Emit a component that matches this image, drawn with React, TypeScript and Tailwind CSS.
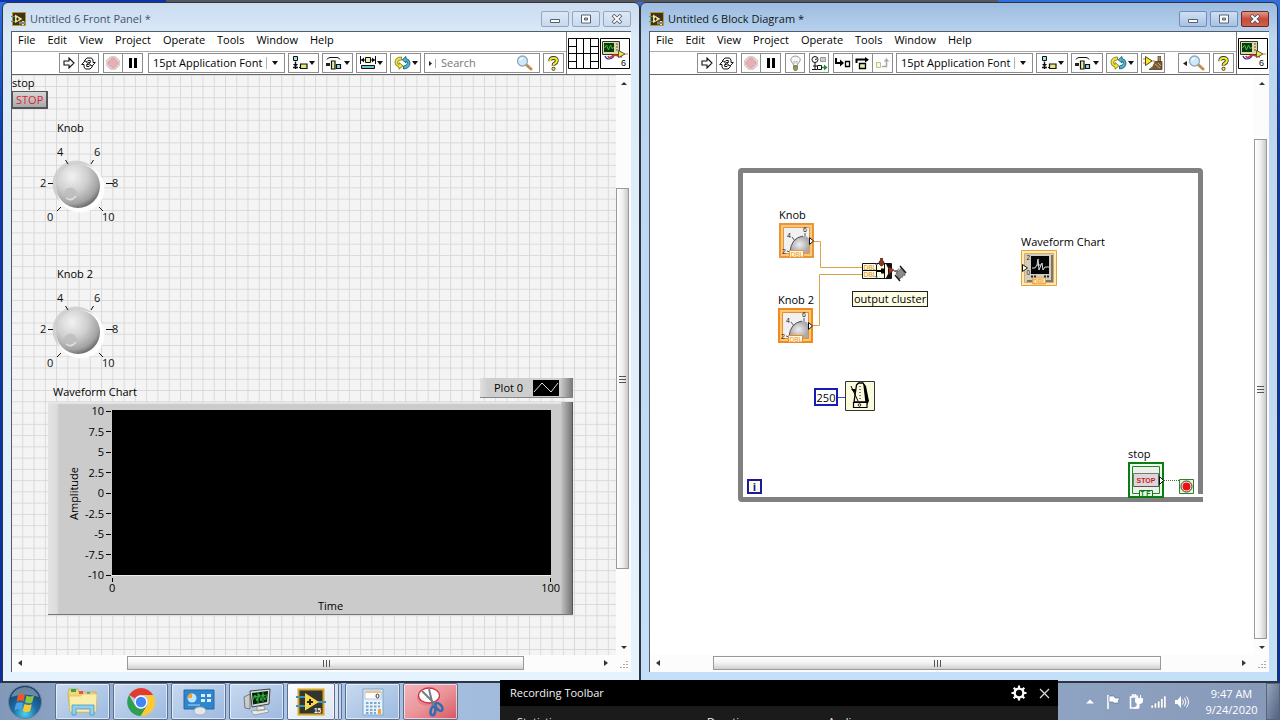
import type { ReactNode } from "react";

const MENUS = ["File", "Edit", "View", "Project", "Operate", "Tools", "Window", "Help"];
const Y_TICKS = ["10", "7.5", "5", "2.5", "0", "-2.5", "-5", "-7.5", "-10"];

/* ---------- toolbar icons ---------- */

function Caret() {
  return (
    <svg width="6" height="4" viewBox="0 0 6 4" className="shrink-0">
      <path d="M0 0h6L3 4z" fill="#111" />
    </svg>
  );
}

function RunIcon() {
  return (
    <svg width="12" height="12" viewBox="0 0 12 12">
      <path d="M1 4h5V1l5 5-5 5V8H1z" fill="#fff" stroke="#111" strokeWidth="1.1" />
    </svg>
  );
}

function RunLoopIcon() {
  return (
    <svg width="15" height="13" viewBox="0 0 15 13" fill="#fff" stroke="#111" strokeWidth="1">
      <path d="M3.500 3.500 6 1h4.500L12 3V5.500h2.300L10.800 9.300 7.300 5.500h2V3.500H7L5.500 5z" />
      <path d="M11.500 9.500 9 12H4.500L3 10V7.500H.7L4.200 3.700 7.700 7.500h-2v2H8L9.500 8z" />
    </svg>
  );
}

function AbortIcon() {
  return (
    <svg width="14" height="14" viewBox="0 0 14 14">
      <path d="M4.500 1h5L13 4.500v5L9.500 13h-5L1 9.500v-5z" fill="#fff" stroke="#b0a0a0" />
      <circle cx="7" cy="7" r="4.700" fill="#e6aeb5" stroke="#cf929b" strokeWidth=".8" />
    </svg>
  );
}

function PauseIcon() {
  return (
    <svg width="10" height="10" viewBox="0 0 10 10">
      <path d="M1 0h3v10H1zM6 0h3v10H6z" fill="#000" />
    </svg>
  );
}

function AlignIcon() {
  return (
    <svg width="16" height="14" viewBox="0 0 16 14">
      <path d="M1.500.5h4v4h-4z" fill="#9fe0ee" stroke="#111" />
      <path d="M3.500 5.500v3M3.500 10v3M1 11.500h5" stroke="#111" strokeWidth="1.400" />
      <path d="M1 8h5L3.500 11z" fill="#111" />
      <path d="M7 11.500h1.500" stroke="#111" />
      <path d="M8.500 8h6.500v4.500H8.500z" fill="#e6ea7e" stroke="#111" strokeWidth="1.200" />
    </svg>
  );
}

function DistributeIcon() {
  return (
    <svg width="17" height="14" viewBox="0 0 17 14">
      <path d="M1 3.500q1-2 3-2h7q2 0 3 2" fill="none" stroke="#111" />
      <path d="M0 7h4v3H0z" fill="#222" />
      <path d="M5.500 5h3.500v8H5.500z" fill="#eef09a" stroke="#111" strokeWidth="1.200" />
      <path d="M10.500 8.500h4v4h-4z" fill="#8fdcec" stroke="#111" strokeWidth="1.200" />
    </svg>
  );
}

function ResizeIcon() {
  return (
    <svg width="16" height="14" viewBox="0 0 16 14">
      <path d="M.5 0v8M15.500 0v8M1 4h4M11 4h4" stroke="#111" />
      <path d="M4 1.500v5L1 4zM12 1.500v5L15 4z" fill="#111" />
      <path d="M5.500 1.500h5v5h-5z" fill="#eef09a" stroke="#111" />
      <path d="M1.500 9.500h13v3h-13z" fill="#69c5dc" stroke="#111" />
    </svg>
  );
}

function ReorderIcon() {
  return (
    <svg width="17" height="14" viewBox="0 0 17 14" strokeWidth=".8">
      <path d="M7.500 1Q1 1 1 6.500q0 3.500 4 4.500v2.200L9 9.800 5 6.500v2Q3.500 8 3.500 6.500q0-2.500 4-2.500z" fill="#ede63a" stroke="#77720b" />
      <path d="M9.500 13q6.500-.5 6.500-6 0-3.500-4-4.500V.5L8.200 3.800 12 7V5q1.500.5 1.500 2 0 2.500-4 3z" fill="#4fb5cf" stroke="#0b566b" />
    </svg>
  );
}

function MagnifierIcon() {
  return (
    <svg width="17" height="16" viewBox="0 0 17 16" className="shrink-0">
      <path d="m10 9.500 5 4.500" stroke="#c6894f" strokeWidth="3" strokeLinecap="round" />
      <circle cx="6.500" cy="6" r="5" fill="#cfe9f8" stroke="#8eabc0" strokeWidth="1.300" />
      <path d="M3.800 5.500Q4.500 3.300 7 3.200" fill="none" stroke="#fff" strokeWidth="1.300" />
    </svg>
  );
}

function HelpIcon() {
  return (
    <svg width="11" height="15" viewBox="0 0 11 15">
      <path d="M2.300 5Q2 2 5.500 2t3.300 2.800Q8.600 6.600 6.600 7.400 5.500 8 5.500 9.700" fill="none" stroke="#333" strokeWidth="3.800" />
      <circle cx="5.500" cy="12.700" r="2" fill="#333" />
      <path d="M2.300 5Q2 2 5.500 2t3.300 2.800Q8.600 6.600 6.600 7.400 5.500 8 5.500 9.500" fill="none" stroke="#f3ea2c" strokeWidth="2.200" />
      <circle cx="5.500" cy="12.700" r="1.200" fill="#f3ea2c" />
    </svg>
  );
}

function BulbIcon() {
  return (
    <svg width="13" height="16" viewBox="0 0 13 16">
      <path d="M4.500 10.500Q4.500 9 3 7.500 1.200 5.500 2 3.500 3.300 1 6.500 1T11 3.500q.8 2-1 4-1.500 1.500-1.500 3z" fill="#f6f6f6" stroke="#999" />
      <path d="M5 9V6l1.500 1.200L8 6v3" fill="none" stroke="#aaa" strokeWidth=".8" />
      <path d="M4.500 11h4v3l-1 1.500h-2l-1-1.500z" fill="#9b9a55" stroke="#66653b" strokeWidth=".7" />
    </svg>
  );
}

function RetainIcon() {
  return (
    <svg width="17" height="15" viewBox="0 0 17 15">
      <circle cx="4" cy="3.500" r="3" fill="#fff" stroke="#111" />
      <path d="M4 6.500v7M4 3.500 6 3M1 13.500h5M2 10h4" stroke="#111" />
      <path d="M9.500 1.500h5v4h-5z" fill="#ccc" stroke="#999" />
      <path d="M6.500 9.500h4v4h-4z" fill="#fff" stroke="#111" />
      <path d="M11 11.500h4" stroke="#1e8e2d" strokeWidth="1.500" />
      <path d="M13 8.500v6l3.500-3z" fill="#1e8e2d" />
    </svg>
  );
}

function StepIntoIcon() {
  return (
    <svg width="16" height="12" viewBox="0 0 16 12">
      <path d="M1 1v5h6" fill="none" stroke="#000" strokeWidth="2" />
      <path d="M5 2.500v7L9 6z" fill="#000" />
      <path d="M10.500 4.500h4v5h-4z" fill="#fff" stroke="#000" strokeWidth="1.300" />
    </svg>
  );
}

function StepOverIcon() {
  return (
    <svg width="15" height="13" viewBox="0 0 15 13">
      <path d="M1.500 6V2.500H11" fill="none" stroke="#000" strokeWidth="2" />
      <path d="M10 0v5.500l4-2.800z" fill="#000" />
      <path d="M4.500 6.500h6v5h-6z" fill="#e9e9b0" stroke="#000" strokeWidth="1.300" />
    </svg>
  );
}

function StepOutIcon() {
  return (
    <svg width="15" height="12" viewBox="0 0 15 12">
      <path d="M1.500 5.500h4v5h-4z" fill="#fbfbdc" stroke="#bdbd86" />
      <path d="M7 9.500h4.500V4" fill="none" stroke="#aaa" strokeWidth="1.500" />
      <path d="M8.800 4.500h5.400L11.500 1z" fill="#aaa" />
    </svg>
  );
}

function CleanupIcon() {
  return (
    <svg width="20" height="14" viewBox="0 0 20 14" className="shrink-0">
      <path d="M0 3h4M0 7h4M9 5h3" stroke="#c47b3c" />
      <path d="M2.500.5 9 5 2.500 9.500z" fill="#f5e62c" stroke="#554c0c" />
      <path d="M15 0h2.500v6H15z" fill="#a58a55" stroke="#4f3a1c" strokeWidth=".7" />
      <path d="M12 5.500h7V13.500H6q5-2 6-8z" fill="#7a5a34" stroke="#3f2c14" strokeWidth=".7" />
      <path d="m12 8 5 4M15 7l3 3" stroke="#c9a86f" />
    </svg>
  );
}

function ViIcon() {
  return (
    <svg width="30" height="31" viewBox="0 0 30 31" className="shrink-0">
      <path d="M.5.5h29v30H.5z" fill="#fff" stroke="#000" />
      <path d="M2.500 3.500h17v13h-17z" fill="#e0d8a4" stroke="#333" />
      <path d="M4 5h10v9H4z" fill="#053c0c" />
      <path d="M4.500 10l2-3 2 5 2-5 2 4 1-2" fill="none" stroke="#48b848" />
      <path d="M16 6h2M16 9h2M16 12h2" stroke="#555" />
      <path d="M5 18q1 3 4 3t5-3" fill="none" stroke="#2c35a8" strokeWidth="1.200" />
      <path d="M8 18q1 2.500 3 1 3-3 7-1l4 1" fill="none" stroke="#d2332f" strokeWidth="1.700" />
      <path d="M18.500 12.500 25 16l-6.500 3.500z" fill="#f5e62c" stroke="#555" />
      <path d="M25 16h3" stroke="#d99b2b" strokeWidth="1.200" />
      <text x="21" y="28" fontSize="9" fontFamily="Liberation Sans, sans-serif" fill="#000">6</text>
    </svg>
  );
}

function ConnectorPane() {
  return (
    <svg width="31" height="31" viewBox="0 0 31 31" className="shrink-0">
      <path d="M.5.5h30v30H.5z" fill="#fff" stroke="#000" />
      <path d="M8.500 0v31M15.500 0v31M22.500 0v31M0 15.500h31M0 8.500h8M0 23.500h8M23 8.500h8M23 23.500h8" stroke="#000" fill="none" />
    </svg>
  );
}

function AppIcon() {
  return (
    <svg width="15" height="14" viewBox="0 0 15 14" className="shrink-0">
      <path d="M1.500.5h13v13h-13z" fill="#3a3420" stroke="#b9952c" />
      <path d="M0 4.500h4M0 9.500h4" stroke="#3b92b8" />
      <path d="M4 2.500 11.500 7 4 11z" fill="#f4e48a" />
      <path d="M5 7h3M6.500 5.500v3" stroke="#222" />
      <path d="M9 12.500v-3M11 9.500h2v3h-2z" stroke="#fff" strokeWidth=".8" fill="none" />
    </svg>
  );
}

/* ---------- window chrome ---------- */

function ToolButton({ label, size, children }: { label: string; size: string; children: ReactNode }) {
  return (
    <button
      type="button"
      aria-label={label}
      className={`flex h-5 shrink-0 items-center justify-center gap-px border border-[#8c8c8c] bg-[#fdfdfd] ${size}`}
    >
      {children}
    </button>
  );
}

function FontSelect({ id }: { id: string }) {
  return (
    <div className="relative flex h-5 w-[137px] shrink-0 items-center border border-[#8c8c8c] bg-white">
      <select id={id} aria-label="Font" className="h-full w-full appearance-none bg-transparent pl-1 text-[11px] leading-4 outline-none">
        <option>15pt Application Font</option>
      </select>
      <span className="pointer-events-none absolute inset-y-0 right-0 flex w-[18px] items-center justify-center">
        <span className="absolute left-0 h-3 w-px bg-[#b5b5b5]" />
        <Caret />
      </span>
    </div>
  );
}

function RunButtons() {
  return (
    <>
      <div className="flex">
        <ToolButton label="Run" size="w-5"><RunIcon /></ToolButton>
        <ToolButton label="Run continuously" size="w-[21px] -ml-px"><RunLoopIcon /></ToolButton>
      </div>
      <div className="flex">
        <ToolButton label="Abort execution" size="w-5"><AbortIcon /></ToolButton>
        <ToolButton label="Pause" size="w-[21px] -ml-px"><PauseIcon /></ToolButton>
      </div>
    </>
  );
}

function MenuBar() {
  return (
    <nav className="flex h-[19px] items-center gap-3 pb-[3px] pl-1.5 text-[11px] leading-4">
      {MENUS.map((m) => (
        <button key={m} type="button">{m}</button>
      ))}
    </nav>
  );
}

function CaptionButtons({ active }: { active?: boolean }) {
  const plain = active
    ? "border-[#6f8db5] bg-linear-to-b from-[#cfe0f4] to-[#a8c2e2]"
    : "border-[#94a5bd] bg-linear-to-b from-[#dce8f5] to-[#c9daee]";
  const close = active
    ? "border-[#6d2b28] bg-linear-to-b from-[#e09a88] via-[#c94a38] to-[#d0604a]"
    : plain;
  return (
    <div className="flex gap-[3px]">
      <button type="button" aria-label="Minimize" className={`flex h-4 w-7 items-center justify-center rounded-xs border ${plain}`}>
        <svg width="12" height="10" viewBox="0 0 12 10">
          <path d="M1.500 5.500h9v3h-9z" fill="#fff" stroke="#55606e" />
        </svg>
      </button>
      <button type="button" aria-label="Restore" className={`flex h-4 w-7 items-center justify-center rounded-xs border ${plain}`}>
        <svg width="12" height="10" viewBox="0 0 12 10">
          <path d="M1.500 1h9v8h-9z" fill="#fff" stroke="#55606e" />
          <path d="M4.500 4h3v2h-3z" fill="#bcd" stroke="#55606e" />
        </svg>
      </button>
      <button type="button" aria-label="Close" className={`flex h-4 w-7 items-center justify-center rounded-xs border ${close}`}>
        <svg width="12" height="10" viewBox="0 0 12 10">
          <path d="m2 1 8 8M10 1 2 9" stroke="#4d5663" strokeWidth="3.600" />
          <path d="m2.500 1.500 7 7M9.500 1.500l-7 7" stroke="#fff" strokeWidth="2" />
        </svg>
      </button>
    </div>
  );
}

function Arrow({ d, label }: { d: string; label: string }) {
  return (
    <button type="button" aria-label={label} className="flex size-4 shrink-0 items-center justify-center">
      <svg width="8" height="8" viewBox="0 0 8 8"><path d={d} fill="#333" /></svg>
    </button>
  );
}

function VScroll({ thumb }: { thumb: string }) {
  return (
    <div className="flex w-[15px] shrink-0 flex-col items-center bg-[#fcfcfc]">
      <Arrow label="Scroll up" d="M1 6h6L4 3z" />
      <div className="flex w-full flex-1 flex-col pr-0.5">
        <div className={`flex items-center justify-center border border-[#999] bg-linear-to-r from-white via-[#f0f0f0] to-[#c9c9cc] ${thumb}`}>
          <svg width="7" height="8" viewBox="0 0 7 8"><path d="M0 1.500h7M0 4.500h7M0 7.500h7" stroke="#555" /></svg>
        </div>
      </div>
      <Arrow label="Scroll down" d="M1 3h6L4 6z" />
    </div>
  );
}

function HScroll({ thumb }: { thumb: string }) {
  return (
    <div className="flex h-[17px] shrink-0 items-center bg-[#fcfcfc] pb-px">
      <Arrow label="Scroll left" d="M6 1v6L2 4z" />
      <div className="flex h-full flex-1 items-center">
        <div className={`flex h-[14px] items-center justify-center border border-[#999] bg-linear-to-b from-white via-[#f2f2f2] to-[#cfcfcf] ${thumb}`}>
          <svg width="8" height="7" viewBox="0 0 8 7"><path d="M1.500 0v7M4.500 0v7M7.500 0v7" stroke="#555" /></svg>
        </div>
      </div>
      <Arrow label="Scroll right" d="M2 1v6l4-3z" />
      <svg width="17" height="17" viewBox="0 0 17 17" className="shrink-0">
        <path d="M12 6h2v1h-2zM9 9h2v1H9zM12 9h2v1h-2zM6 12h2v1H6zM9 12h2v1H9zM12 12h2v1h-2z" fill="#aaa" />
      </svg>
    </div>
  );
}

function AppWindow(props: {
  title: string;
  active?: boolean;
  toolbar: ReactNode;
  corner: ReactNode;
  thumbV: string;
  thumbH: string;
  children: ReactNode;
}) {
  const frame = props.active
    ? "bg-linear-to-b from-[#9dbce0] via-[#bcd5f1] via-5% to-[#c4dff8]"
    : "bg-linear-to-b from-[#cbdcf0] via-[#dcebf9] via-5% to-[#e4f3fd]";
  const title = props.active ? "text-[#101820]" : "text-[#46536a]";
  return (
    <section className={`flex min-w-0 flex-1 flex-col rounded-t-md border border-[#30343c] px-2 pb-[9px] ${frame}`}>
      <header className="flex h-7 shrink-0 items-center gap-1 pt-1">
        <AppIcon />
        <h2 className={`flex-1 text-[11px] leading-4 ${title}`}>{props.title}</h2>
        <CaptionButtons active={props.active} />
      </header>
      <div className="flex min-h-0 flex-1 flex-col border-t border-l border-[#555c66] bg-white">
        <div className="flex shrink-0 border-b border-[#666]">
          <div className="min-w-0 flex-1">
            <MenuBar />
            <div className="flex h-[23px] items-center border-t border-[#aaa] pr-0.5 pl-[47px]">{props.toolbar}</div>
          </div>
          <div className="flex items-center border-l border-[#777] px-px">{props.corner}</div>
        </div>
        <div className="flex min-h-0 flex-1">
          <div className="relative min-w-0 flex-1 overflow-hidden">{props.children}</div>
          <VScroll thumb={props.thumbV} />
        </div>
        <HScroll thumb={props.thumbH} />
      </div>
    </section>
  );
}

/* ---------- front panel ---------- */

function Knob({ label, place, id }: { label: string; place: string; id: string }) {
  return (
    <figure className={`absolute w-[84px] ${place}`}>
      <figcaption className="pl-[18px] text-[11px] leading-4">{label}</figcaption>
      <svg width="84" height="90" viewBox="0 0 84 90" role="img" aria-label={label} className="block">
        <defs>
          <radialGradient id={id} cx=".36" cy=".28" r=".78">
            <stop offset="0" stopColor="#f2f2f2" />
            <stop offset=".45" stopColor="#d0d0d0" />
            <stop offset=".8" stopColor="#a2a2a2" />
            <stop offset="1" stopColor="#5c5c5c" />
          </radialGradient>
        </defs>
        <circle cx="37" cy="48" r="23.500" fill="#c9c9c9" opacity=".8" />
        <circle cx="41.500" cy="52.500" r="24" fill="#fff" opacity=".9" />
        <circle cx="39" cy="50" r="22" fill={`url(#${id})`} />
        <circle cx="31.500" cy="58" r="6.500" fill="#bdbdbd" opacity=".8" />
        <path d="M27 62q5 4 10-2" fill="none" stroke="#dedede" strokeWidth="1.500" />
        <path d="M26.500 24l2.500 4M54.500 24 52 28M9 47.500h5M67 47.500h7M18 75l4-4M60 71l4 4" stroke="#111" />
        <g fontFamily="Open Sans, Noto Sans, sans-serif" fontSize="11" fill="#111">
          <text x="18" y="20">4</text>
          <text x="55" y="20">6</text>
          <text x="1" y="51">2</text>
          <text x="73" y="51">8</text>
          <text x="8" y="85">0</text>
          <text x="63" y="85">10</text>
        </g>
      </svg>
    </figure>
  );
}

function WaveformChart() {
  return (
    <figure className="absolute top-[327px] left-9 w-[525px] border-b border-[#777] bg-[linear-gradient(to_right,#e4e4e4_0,#dcdcdc_9px,#cbcbcb_11px)] pt-2 shadow-[inset_0_2px_1px_#e6e6e6]">
      <div className="flex">
        <div className="flex w-10 items-center justify-center pl-3">
          <span className="rotate-180 text-[11px] leading-4 [writing-mode:vertical-rl]">Amplitude</span>
        </div>
        <ol className="-my-[7px] flex h-[180px] w-6 flex-col justify-between text-[11px] leading-4">
          {Y_TICKS.map((t) => (
            <li key={t} className="flex h-4 items-center justify-end gap-0.5 pr-px whitespace-nowrap">
              {t}
              <span className="h-px w-[5px] shrink-0 bg-black" />
            </li>
          ))}
        </ol>
        <div className="h-[166px] w-[439px] border-b border-[#eee] bg-black" />
      </div>
      <div className="ml-[61px] flex h-[22px] w-[451px] justify-between text-[11px] leading-3">
        <span className="flex flex-col items-center"><i className="mt-0.5 h-1 w-px bg-black" />0</span>
        <span className="flex flex-col items-center"><i className="mt-0.5 h-1 w-px bg-black" />100</span>
      </div>
      <p className="pl-10 text-center text-[11px] leading-4">Time</p>
      <span className="absolute inset-y-0 right-0 w-3 border-r border-[#555] bg-linear-to-r from-[#c4c4c4] to-[#777]" />
    </figure>
  );
}

function FrontPanel() {
  return (
    <div className="h-full bg-[#f4f4f4] text-black">
      <svg className="absolute inset-0 h-full w-full" aria-hidden="true">
        <defs>
          <pattern id="panel-grid" width="11.26" height="11.26" x="10.3" y="-.2" patternUnits="userSpaceOnUse">
            <path d="M.5 0v11.260M0 .5h11.260" stroke="#d9d9d9" />
          </pattern>
        </defs>
        <rect width="100%" height="100%" fill="url(#panel-grid)" />
      </svg>
      <div className="absolute top-0 left-0 flex flex-col items-start">
        <label htmlFor="stop" className="text-[11px] leading-4">stop</label>
        <button
          id="stop"
          type="button"
          className="h-[18px] border border-r-2 border-b-2 border-[#555] bg-linear-to-b from-[#d6d6d6] to-[#aaa] px-[3px] text-[11px] leading-3 text-[#dc1f36]"
        >
          STOP
        </button>
      </div>
      <Knob id="knob-a" label="Knob" place="top-[45px] left-[27px]" />
      <Knob id="knob-b" label="Knob 2" place="top-[191px] left-[27px]" />
      <span className="absolute top-[309px] left-[41px] text-[11px] leading-4">Waveform Chart</span>
      <div className="absolute top-[303px] left-[468px] flex h-5 w-[93px] items-center gap-2.5 border-b border-[#888] bg-[linear-gradient(to_right,#e0e0e0_0,#cecece_8px,#cecece_80px,#777_100%)] pl-[14px] text-[11px] leading-4">
        Plot 0
        <svg width="26" height="16" viewBox="0 0 26 16">
          <path d="M0 0h26v16H0z" fill="#000" />
          <path d="M1 12 9 3l9 9 7-9" fill="none" stroke="#ddd" />
        </svg>
      </div>
      <WaveformChart />
    </div>
  );
}

/* ---------- block diagram ---------- */

function KnobTerminal({ label, place, border, id }: { label: string; place: string; border: string; id: string }) {
  return (
    <div className={`absolute ${place}`}>
      <p className="text-[11px] leading-4">{label}</p>
      <svg width="36" height="36" viewBox="0 0 36 36" className="block">
        <defs>
          <radialGradient id={id}>
            <stop offset="0" stopColor="#eee" />
            <stop offset="1" stopColor="#a9a9ad" />
          </radialGradient>
        </defs>
        <path d="M1 1h33v33H1z" fill="#fbc77c" stroke={border} strokeWidth="2" />
        <path d="M4.500 4.500h26v26h-26z" fill="#f1f1f3" stroke={border} />
        <path d="M11 30q1-16 13-17 6 0 6 4v13z" fill={`url(#${id})`} />
        <path d="M11 29q1-14 13-16M26 10v3M13 14l3 4M8 28l3 1" fill="none" stroke="#555" />
        <path d="M30.500 14.500v7l4-3.500z" fill="#fff" stroke="#111" />
        <path d="M10.500 27.500h14v7h-14z" fill="#fff7df" stroke={border} />
        <g fontFamily="Liberation Sans, sans-serif" fill="#222" fontSize="7">
          <text x="24" y="9">6</text>
          <text x="8" y="15">4</text>
          <text x="3" y="31">2</text>
          <text x="11.500" y="33.500" fill="#e5921f" fontSize="6.500">DBL</text>
        </g>
      </svg>
    </div>
  );
}

function ChartTerminal() {
  return (
    <div className="absolute top-[159px] left-[371px]">
      <p className="text-[11px] leading-4 whitespace-nowrap">Waveform Chart</p>
      <svg width="36" height="36" viewBox="0 0 36 36" className="block">
        <path d="M.5.5h35v35H.5z" fill="#ffeab0" stroke="#d9a441" />
        <path d="M3.500 3.500h29v29h-29z" fill="#d1cdbf" stroke="#e0a85c" />
        <path d="M31 5v26H6" fill="none" stroke="#777" strokeWidth="2" />
        <path d="M10 6h18v18H10z" fill="#050505" />
        <path d="M11 18h3l2-3 1-6 1 11 3-7 1 7 2-3h4M16 15h4" fill="none" stroke="#ddd" />
        <path d="M1.500 14.500v7l5-3.500z" fill="#fff" stroke="#111" />
        <path d="M10 26.500h5M23 26.500h6" stroke="#222" strokeWidth="2" strokeDasharray="2 1" />
        <path d="M11.500 28h13v6h-13z" fill="#ffe6b5" stroke="#e5921f" strokeWidth=".7" />
        <g fontFamily="Liberation Sans, sans-serif" fill="#222" fontSize="6.500">
          <text x="5.500" y="10">2</text>
          <text x="5.500" y="25">0</text>
          <text x="12" y="33.500" fill="#e5921f">DBL</text>
        </g>
      </svg>
    </div>
  );
}

function BundleNode() {
  return (
    <svg width="46" height="24" viewBox="0 0 46 24" className="absolute top-[183px] left-[212px]">
      <path d="M.5 5.500h29v15H.5z" fill="#fdfbe0" stroke="#111" />
      <path d="M0 12.500h15M14.500 5v16M22.500 5v16" stroke="#111" fill="none" />
      <g fontFamily="Liberation Sans, sans-serif" fontSize="6.500" fill="#dc8b1b">
        <text x="1.500" y="11.500">DBL</text>
        <text x="1.500" y="19">DBL</text>
      </g>
      <path d="M15 12h4v-1.500h4v5h-4V14h-4z" fill="#000" />
      <path d="M24 6h5v14h-5l2-4v-6z" fill="#111" />
      <path d="M26 10l-2 3 2 3" fill="none" stroke="#fff" />
      <path d="m13 7 1.500-2L16 7zM13 18.500l1.500 2 1.500-2z" fill="#3a7ee0" />
      <path d="M17 6V4l1.500-2V0h2v2L22 4v2l-2 2h-1z" fill="#8c3322" stroke="#4b130b" strokeWidth=".6" />
      <path d="m27 9 5 3-5 4z" fill="#a33422" stroke="#5f170c" strokeWidth=".6" />
      <path d="M32 13h4" stroke="#111" />
      <path d="m34 15 6-5 3 6-6 5z" fill="#8b8b8b" stroke="#333" strokeWidth=".6" />
      <path d="M33 17l5 6M38 8l6 7" stroke="#222" strokeWidth="1.600" />
      <path d="M33 13.500l6-4M37 21.500l7-5" stroke="#444" strokeDasharray="1 1" />
    </svg>
  );
}

function MetronomeNode() {
  return (
    <svg width="30" height="30" viewBox="0 0 30 30" className="absolute top-[306px] left-[195px]">
      <path d="M.5.500h29v29H.5z" fill="#fafadc" stroke="#333" />
      <path d="m11.500 4 2-2h5l2.500 3 3 15-3 6" fill="#000" />
      <path d="m11.500 4 2-2h4.500l1 2 2 17H9z" fill="#fafadc" stroke="#000" strokeWidth="1.300" />
      <path d="M8.500 21.500H22v5H8.500z" fill="#fafadc" stroke="#000" strokeWidth="1.200" />
      <path d="m6 5 7 15" stroke="#000" fill="none" />
      <path d="m6 8 4.500 0-1 4z" fill="#000" />
      <path d="M15 5v14" stroke="#000" strokeDasharray="1 2" />
      <circle cx="14.500" cy="24" r="1.300" fill="none" stroke="#000" strokeWidth=".8" />
    </svg>
  );
}

function StopTerminal() {
  return (
    <div className="absolute top-[371px] left-[478px]">
      <p className="text-[11px] leading-4">stop</p>
      <svg width="36" height="36" viewBox="0 0 36 36" className="block">
        <path d="M1 1h34v34H1z" fill="#eafbea" stroke="#0e7a16" strokeWidth="2" />
        <path d="M4.500 4.500h27v27h-27z" fill="#eeeeea" stroke="#1c8a24" />
        <path d="M5.500 11.500h25v13h-25z" fill="#dbd8d9" stroke="#777" />
        <path d="M6 24.500h25V12" fill="none" stroke="#555" />
        <path d="M31.500 14.500v8l4-4z" fill="#fff" stroke="#111" />
        <path d="M11.500 28.500h13v6h-13z" fill="#dff8df" stroke="#0e7a16" />
        <g fontFamily="Liberation Sans, sans-serif" fontWeight="700">
          <text x="8.500" y="21" fontSize="7" fill="#cc1b2b">STOP</text>
          <text x="12.500" y="34" fontSize="6.500" fill="#0e7a16">T F</text>
        </g>
      </svg>
    </div>
  );
}

function BlockDiagram() {
  return (
    <div className="h-full bg-white text-black">
      <div className="absolute top-[93px] left-[88px] h-[334px] w-[465px] rounded-sm rounded-br-none border-[5px] border-[#808080]" />
      <span className="absolute top-[419px] left-[544px] h-[3px] w-[9px] bg-white" />
      <svg width="600" height="440" viewBox="0 0 600 440" className="absolute top-0 left-0" fill="none">
        <path d="M164 166.500h6.500v26H213M163 250.500h6.500v-51H213" stroke="#dfa04c" />
        <path d="M187 322.500h9" stroke="#4a4ac0" />
        <path d="M514 405.500h17" stroke="#2c7a32" strokeDasharray="1 1" />
      </svg>
      <KnobTerminal id="term-a" label="Knob" border="#e9963a" place="top-[132px] left-[129px]" />
      <KnobTerminal id="term-b" label="Knob 2" border="#f08a1c" place="top-[217px] left-[128px]" />
      <BundleNode />
      <span role="tooltip" className="absolute top-[216px] left-[202px] border border-[#222] bg-[#fdfde4] px-px text-[11px] leading-[14px] whitespace-nowrap">
        output cluster
      </span>
      <ChartTerminal />
      <input
        aria-label="Milliseconds to wait"
        defaultValue="250"
        className="absolute top-[313px] left-[164px] h-[18px] w-6 border-2 border-[#1a1ab4] bg-white text-center text-[11px] leading-3"
      />
      <MetronomeNode />
      <span className="absolute top-[404px] left-[97px] flex size-[15px] items-center justify-center border-2 border-[#1a1a9a] bg-[#fdfde8] text-[11px] leading-3 font-bold text-[#1a1a9a]">
        i
      </span>
      <StopTerminal />
      <svg width="15" height="15" viewBox="0 0 15 15" className="absolute top-[404px] left-[529px]">
        <path d="M.5.500h14v14H.5z" fill="#e3f9c8" stroke="#3d7a2c" />
        <circle cx="7.500" cy="7.500" r="5.500" fill="#fff" stroke="#333" />
        <circle cx="7.500" cy="7.500" r="4" fill="#ef1010" />
      </svg>
    </div>
  );
}

/* ---------- taskbar ---------- */

function StartOrb() {
  return (
    <button type="button" aria-label="Start" className="ml-1.5 flex w-[38px] items-center justify-center">
      <svg width="36" height="36" viewBox="0 0 36 36">
        <defs>
          <radialGradient id="orb" cx=".5" cy=".85" r=".8">
            <stop offset="0" stopColor="#49d4ee" />
            <stop offset=".45" stopColor="#1d6ba6" />
            <stop offset="1" stopColor="#173c66" />
          </radialGradient>
        </defs>
        <circle cx="18" cy="18" r="16.500" fill="url(#orb)" stroke="#6b8299" />
        <path d="M4 13Q8 3 18 3t14 10q-14-5-28 0z" fill="#fff" opacity=".35" />
        <path d="M11 11q3.500-2.500 7-.5l-1.500 7q-3.500-2-7 .5z" fill="#ea5a24" />
        <path d="M19.500 11.500q3.500 2 7.500 0l-1.800 7q-3.500 1.800-7.200-.2z" fill="#8fc63e" />
        <path d="M9 19.500q3.500-2.300 7-.5l-1.700 7q-3.500-2-7 .5z" fill="#4aa3e0" />
        <path d="M17.500 20q3.500 2 7.200.2l-1.700 7q-3.700 1.500-7.200-.2z" fill="#fbc92d" />
      </svg>
    </button>
  );
}

function TaskButton({ label, look, children }: { label: string; look: string; children: ReactNode }) {
  return (
    <button
      type="button"
      aria-label={label}
      className={`flex h-[37px] items-center justify-center rounded-xs border border-[#5b7090] shadow-[inset_0_0_0_1px_rgba(255,255,255,0.6)] ${look}`}
    >
      {children}
    </button>
  );
}

function Taskbar() {
  const idle = "w-[55px] bg-linear-to-br from-[#c9d9ef] to-[#9dbae0]";
  return (
    <footer className="flex h-[38px] shrink-0 border-t border-[#2c3646] bg-linear-to-r from-[#8298b8] via-[#aac6e9] via-20% to-[#8799b8]">
      <StartOrb />
      <div className="ml-[11px] flex flex-1 gap-[3px]">
        <TaskButton label="File Explorer" look={idle}>
          <svg width="32" height="28" viewBox="0 0 32 28">
            <path d="M1 5 2 1h9l1 3h17v20H3z" fill="#f0d878" stroke="#c4a63f" strokeWidth=".7" />
            <path d="M4 1h5v3H4z" fill="#3ba14c" />
            <path d="M12 3h4v3h-4z" fill="#e95442" />
            <path d="M20 4h3v2h-3z" fill="#4a98c4" />
            <path d="M2 8h12l2-2h14l-1 18H3z" fill="#fbedaa" stroke="#d6bc5e" strokeWidth=".7" />
            <path d="M5 27V17h22v10h-4v-6H9v6z" fill="#8fd0ee" stroke="#4a98c4" strokeWidth=".8" />
          </svg>
        </TaskButton>
        <TaskButton label="Chrome" look={idle}>
          <svg width="28" height="28" viewBox="0 0 28 28">
            <path d="M2 7A14 14 0 0 1 26.200 7H14a7 7 0 0 0-6 3.500z" fill="#e33b2e" />
            <path d="M26.200 7A14 14 0 0 1 13.500 28l6.600-10.500A7 7 0 0 0 19 9z" fill="#fcc934" />
            <path d="M2 7a14 14 0 0 0 11.500 21l6.500-10.500a7 7 0 0 1-12 0z" fill="#2f9e4f" />
            <path d="M14 7h12.200L26 8h-8z" fill="#fcc934" />
            <circle cx="14" cy="14" r="6.500" fill="#fff" />
            <circle cx="14" cy="14" r="5.200" fill="#4285f4" />
          </svg>
        </TaskButton>
        <TaskButton label="Control Panel" look={idle}>
          <svg width="32" height="28" viewBox="0 0 32 28">
            <path d="M1 2h30v19H1z" fill="#2f86cc" stroke="#2767a0" />
            <circle cx="9" cy="10" r="4.500" fill="#bfe3fa" />
            <path d="M9 10V5.500A4.500 4.500 0 0 0 4.500 10z" fill="#f5a227" />
            <path d="M18 6h4v3h-4zM24 6h4v3h-4zM18 11h4v3h-4zM24 11h4v3h-4z" fill="#d7efff" />
            <path d="M5 17h12" stroke="#a8d7f5" />
            <ellipse cx="17" cy="23" rx="6" ry="4" fill="#e4e7ea" stroke="#9aa3ab" strokeWidth=".7" />
          </svg>
        </TaskButton>
        <TaskButton label="Measurement" look={idle}>
          <svg width="32" height="28" viewBox="0 0 32 28">
            <path d="m3 9 6-3v15l-5-1z" fill="#c9ccc9" stroke="#555" strokeWidth=".7" />
            <path d="m9 3 20-2-1 15-17 3z" fill="#d8dcd8" stroke="#444" />
            <path d="m11 5 16-2-1 11-14 2.500z" fill="#03240a" />
            <path d="m12 12 2-5 2 6 2-7 2 7 2-7 2 6 2-4M12 9l14-2M17 4v11M22 4v10" fill="none" stroke="#35b443" strokeWidth=".9" />
            <path d="m16 19 7-1 1 4-8 1zM10 23l16-2 2 3-15 3z" fill="#e9ebe9" stroke="#888" strokeWidth=".7" />
          </svg>
        </TaskButton>
        <div className="flex w-[55px]">
          <TaskButton label="LabVIEW" look="w-12 bg-linear-to-br from-[#fbfdff] to-[#dbe5f1]">
            <svg width="30" height="28" viewBox="0 0 30 28">
              <path d="M2.500 1.500h25v25h-25z" fill="#353530" stroke="#d6a522" strokeWidth="2" />
              <path d="M0 9h9M0 18h9M22 14h8" stroke="#3c93b6" strokeWidth="1.800" />
              <path d="m9 5 14 9-14 8.500z" fill="#f9d84a" />
              <path d="M11 14h6M14 11v6" stroke="#222" strokeWidth="2" />
              <text x="18" y="25" fontSize="6.500" fontWeight="700" fontFamily="Liberation Sans, sans-serif" fill="#fff">15</text>
            </svg>
          </TaskButton>
          <span className="h-[37px] w-1 rounded-r-xs border border-l-0 border-[#5b7090] bg-[#d5e2f2]" />
          <span className="h-[37px] w-[3px] rounded-r-xs border border-l-0 border-[#5b7090] bg-[#c5d6ec]" />
        </div>
        <TaskButton label="Calculator" look={idle}>
          <svg width="22" height="28" viewBox="0 0 22 28">
            <path d="M1 1h20v26H1z" fill="#e8f2fa" stroke="#7fa4c6" />
            <path d="M3 3h16v8H3z" fill="#fff" stroke="#9dbbd6" strokeWidth=".8" />
            <path d="M3 3h16v2H3z" fill="#f0c489" />
            <ellipse cx="15.500" cy="8" rx="1.500" ry="2" fill="none" stroke="#333" />
            <path d="M4 15h14M4 18.500h14M4 22h10M4 25h10" stroke="#7aa7cf" strokeWidth="2" strokeDasharray="2.500 1.500" />
            <path d="M16 21h3v5h-3z" fill="#f0a431" />
          </svg>
        </TaskButton>
        <TaskButton label="Snipping Tool" look="w-[55px] bg-linear-to-br from-[#f3b6bb] via-[#e9969c] to-[#d7555f]">
          <svg width="30" height="30" viewBox="0 0 30 30">
            <ellipse cx="12" cy="11" rx="11" ry="8" fill="#e6808c" />
            <ellipse cx="13" cy="8.500" rx="10.500" ry="7.500" fill="#fff" stroke="#cf3448" strokeWidth="1.300" />
            <path d="M6 4 20 18M13 2l4 17" stroke="#767c84" strokeWidth="2" />
            <ellipse cx="23" cy="20" rx="2.600" ry="4.500" fill="none" stroke="#2f6eb5" strokeWidth="2.600" transform="rotate(-40 23 20)" />
            <ellipse cx="17" cy="24" rx="2.300" ry="4.300" fill="none" stroke="#2f6eb5" strokeWidth="2.600" transform="rotate(10 17 24)" />
          </svg>
        </TaskButton>
      </div>
      <div className="flex items-center gap-2 pr-4">
        <button type="button" aria-label="Show hidden icons" className="mr-1">
          <svg width="8" height="5" viewBox="0 0 8 5"><path d="M0 4.500h8L4 .5z" fill="#fff" /></svg>
        </button>
        <svg width="15" height="16" viewBox="0 0 15 16" aria-label="Action Center">
          <path d="M2 1v14" stroke="#fff" strokeWidth="1.600" />
          <path d="M3 2h5l1 2h5l-2 3 1 2H8L7 8H3z" fill="#fff" stroke="#5b6c88" strokeWidth=".6" />
        </svg>
        <svg width="14" height="16" viewBox="0 0 14 16" aria-label="Power">
          <path d="M1.500 3h7v11h-7zM3.500 1h3v2h-3z" fill="none" stroke="#fff" strokeWidth="1.500" />
          <path d="M8 1v3M11.500 1v3M6.500 4.500h7v3q0 2-3.500 2t-3.500-2zM10 9.500V14H5" fill="#fff" stroke="#fff" />
        </svg>
        <svg width="15" height="12" viewBox="0 0 15 12" aria-label="Network">
          <path d="M0 9h2.500v3H0zM3.200 7h2.500v5H3.200zM6.400 5h2.500v7H6.400zM9.600 2.500h2.400v9.500H9.600zM12.600 0H15v12h-2.400z" fill="#fff" stroke="#5b6c88" strokeWidth=".4" />
        </svg>
        <svg width="15" height="14" viewBox="0 0 15 14" aria-label="Volume">
          <path d="M1 5h2.500L7 1v12L3.500 9H1z" fill="#fff" />
          <path d="M8.500 4.500q2 2.500 0 5M10.500 3q3 4 0 8M12.500 1.500q4 5.500 0 11" fill="none" stroke="#fff" />
        </svg>
      </div>
      <div className="flex w-[53px] flex-col items-center justify-center text-[11px] leading-4 whitespace-nowrap text-white">
        <time>9:47 AM</time>
        <time>9/24/2020</time>
      </div>
      <button type="button" aria-label="Show desktop" className="ml-2 w-[14px] border border-[#56657f] bg-linear-to-br from-[#95a5bf] to-[#53637f]" />
    </footer>
  );
}

function RecordingToolbar() {
  return (
    <aside className="absolute top-[680px] left-[500px] h-10 w-[558px] overflow-hidden bg-[#1b1b1b] text-[11px] text-[#f2f2f2]">
      <div className="flex h-[26px] items-center bg-black pr-2 pl-2.5">
        <h2 className="flex-1 leading-4">Recording Toolbar</h2>
        <button type="button" aria-label="Settings" className="mr-3">
          <svg width="16" height="16" viewBox="0 0 16 16">
            <circle cx="8" cy="8" r="4.400" fill="none" stroke="#fff" strokeWidth="2.400" />
            <path d="M8 .5v3M8 12.500v3M.5 8h3M12.500 8h3M2.700 2.700l2 2M11.300 11.300l2 2M13.300 2.700l-2 2M4.700 11.300l-2 2" stroke="#fff" strokeWidth="2.200" />
          </svg>
        </button>
        <button type="button" aria-label="Close toolbar">
          <svg width="11" height="11" viewBox="0 0 11 11"><path d="m1 1 9 9M10 1l-9 9" stroke="#ddd" strokeWidth="1.200" /></svg>
        </button>
      </div>
      <div className="flex pt-2 pl-[17px] leading-4">
        <span className="w-[190px]">Statistics</span>
        <span className="w-[121px]">Duration</span>
        <span>Audio</span>
      </div>
    </aside>
  );
}

/* ---------- page ---------- */

export default function App() {
  return (
    <div className="relative flex h-screen flex-col overflow-hidden bg-linear-to-b from-[#2f6fe0] via-[#0a3bb8] via-20% to-[#062f9e] font-['Open_Sans','Noto_Sans',sans-serif] text-black">
      <main className="flex min-h-0 flex-1 bg-[linear-gradient(to_right,#0a35b0_13%,#55585e_13%,#55585e_78%,#2f6fe0_78%)] bg-[length:100%_2px] bg-no-repeat px-0.5 pt-0.5">
        <AppWindow
          title="Untitled 6 Front Panel *"
          thumbV="mt-[97px] h-[381px]"
          thumbH="ml-[99px] w-[397px]"
          corner={<div className="flex gap-px"><ConnectorPane /><ViIcon /></div>}
          toolbar={
            <div className="flex flex-1 items-center gap-[3px]">
              <div className="mr-0.5 flex gap-1"><RunButtons /></div>
              <FontSelect id="font-panel" />
              <ToolButton label="Align objects" size="w-[31px]"><AlignIcon /><Caret /></ToolButton>
              <ToolButton label="Distribute objects" size="w-[31px]"><DistributeIcon /><Caret /></ToolButton>
              <ToolButton label="Resize objects" size="w-[31px]"><ResizeIcon /><Caret /></ToolButton>
              <ToolButton label="Reorder" size="w-[31px]"><ReorderIcon /><Caret /></ToolButton>
              <div className="flex h-5 min-w-0 flex-1 items-center border border-[#8c8c8c] bg-white pr-1.5 pl-1">
                <svg width="8" height="9" viewBox="0 0 8 9" className="shrink-0">
                  <path d="M0 2v5l3-2.500z" fill="#222" /><path d="M6.500 0v9" stroke="#aaa" />
                </svg>
                <input aria-label="Search" placeholder="Search" className="ml-1 w-full min-w-0 text-[11px] leading-4 outline-none placeholder:text-[#777]" />
                <MagnifierIcon />
              </div>
              <ToolButton label="Context help" size="w-[21px]"><HelpIcon /></ToolButton>
            </div>
          }
        >
          <FrontPanel />
        </AppWindow>
        <AppWindow
          title="Untitled 6 Block Diagram *"
          active
          thumbV="mt-12 h-[500px]"
          thumbH="ml-[47px] w-[448px]"
          corner={<ViIcon />}
          toolbar={
            <div className="flex flex-1 items-center gap-[3px]">
              <div className="flex gap-1">
                <RunButtons />
                <ToolButton label="Highlight execution" size="w-5"><BulbIcon /></ToolButton>
                <ToolButton label="Retain wire values" size="w-5"><RetainIcon /></ToolButton>
                <div className="flex">
                  <ToolButton label="Step into" size="w-5"><StepIntoIcon /></ToolButton>
                  <ToolButton label="Step over" size="w-[21px] -ml-px"><StepOverIcon /></ToolButton>
                  <ToolButton label="Step out" size="w-[21px] -ml-px"><StepOutIcon /></ToolButton>
                </div>
              </div>
              <FontSelect id="font-diagram" />
              <ToolButton label="Align objects" size="w-8"><AlignIcon /><Caret /></ToolButton>
              <ToolButton label="Distribute objects" size="w-8"><DistributeIcon /><Caret /></ToolButton>
              <ToolButton label="Reorder" size="w-8"><ReorderIcon /><Caret /></ToolButton>
              <ToolButton label="Clean up diagram" size="w-6"><CleanupIcon /></ToolButton>
              <span className="flex-1" />
              <ToolButton label="Search" size="w-8">
                <svg width="4" height="5" viewBox="0 0 4 5"><path d="M4 0v5L0 2.500z" fill="#222" /></svg>
                <MagnifierIcon />
              </ToolButton>
              <ToolButton label="Context help" size="w-[21px]"><HelpIcon /></ToolButton>
            </div>
          }
        >
          <BlockDiagram />
        </AppWindow>
      </main>
      <Taskbar />
      <RecordingToolbar />
    </div>
  );
}
